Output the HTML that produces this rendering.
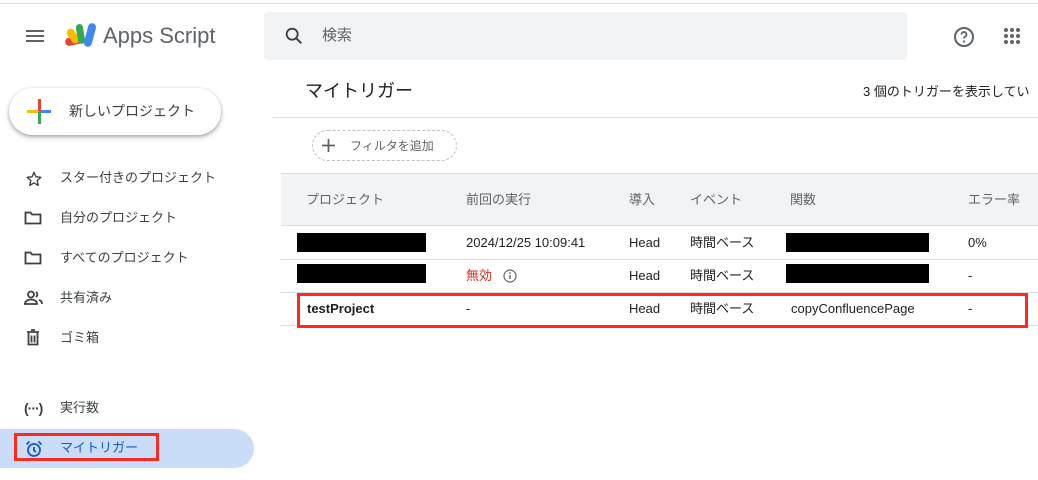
<!DOCTYPE html>
<html><head><meta charset="utf-8"><style>
*{box-sizing:border-box;margin:0;padding:0}
body{width:1038px;height:480px;overflow:hidden;background:#fff;font-family:"Liberation Sans","Noto Sans CJK JP",sans-serif;color:#3c4043;position:relative}
.a{position:absolute}
.nav{position:absolute;left:60px;font-size:13px;color:#3c4043;line-height:16px}
.ic{position:absolute;left:24px}
.t{position:absolute;font-size:13px;color:#202124;white-space:nowrap;line-height:16px}
.h{color:#5f6368}
.blk{position:absolute;background:#000;height:19px}
</style></head><body>
<div class="a" style="left:0;top:3px;width:1038px;height:1px;background:#dadce0"></div>
<div class="a" style="left:26px;top:30px;width:18px;height:2px;background:#5f6368"></div>
<div class="a" style="left:26px;top:35px;width:18px;height:2px;background:#5f6368"></div>
<div class="a" style="left:26px;top:40px;width:18px;height:2px;background:#5f6368"></div>
<svg class="a" style="left:64px;top:22px" width="35" height="27" viewBox="0 0 35 27">
<rect x="1" y="15" width="17" height="8" rx="4" transform="rotate(-12 9 19)" fill="#ea4335"/>
<rect x="5" y="6" width="8" height="16" rx="4" transform="rotate(-35 9 14)" fill="#fbbc04"/>
<rect x="13" y="2" width="7" height="20" rx="3.5" transform="rotate(-10 16 12)" fill="#34a853"/>
<rect x="22" y="1" width="8" height="24" rx="4" transform="rotate(15 26 13)" fill="#4285f4"/>
</svg>
<div class="a" style="left:103px;top:22px;font-size:22px;line-height:28px;color:#5f6368">Apps Script</div>
<div class="a" style="left:264px;top:12px;width:643px;height:48px;background:#f1f3f4;border-radius:4px"></div>
<svg class="a" style="left:283px;top:25px" width="22" height="22" viewBox="0 0 24 24"><circle cx="10" cy="10" r="6" fill="none" stroke="#3c4043" stroke-width="2"/><path d="M14.5 14.5L20 20" stroke="#3c4043" stroke-width="2.2"/></svg>
<div class="a" style="left:322px;top:26px;font-size:15px;line-height:20px;color:#5f6368">検索</div>
<svg class="a" style="left:952px;top:25px" width="24" height="24" viewBox="0 0 24 24"><circle cx="12" cy="12" r="9" fill="none" stroke="#5f6368" stroke-width="2"/><path d="M9.5 9.5a2.5 2.5 0 1 1 3.5 2.3c-.8.4-1 .9-1 1.7" fill="none" stroke="#5f6368" stroke-width="1.8"/><circle cx="12" cy="16.5" r="1.1" fill="#5f6368"/></svg>
<svg class="a" style="left:1003px;top:27px" width="18" height="18" viewBox="0 0 18 18" fill="#5f6368"><circle cx="3" cy="3" r="2"/><circle cx="9" cy="3" r="2"/><circle cx="15" cy="3" r="2"/><circle cx="3" cy="9" r="2"/><circle cx="9" cy="9" r="2"/><circle cx="15" cy="9" r="2"/><circle cx="3" cy="15" r="2"/><circle cx="9" cy="15" r="2"/><circle cx="15" cy="15" r="2"/></svg>
<div class="a" style="left:9px;top:88px;width:212px;height:47px;border-radius:24px;background:#fff;box-shadow:0 1px 3px rgba(0,0,0,.3),0 3px 6px rgba(0,0,0,.15)"></div>
<div class="a" style="left:27px;top:110px;width:12px;height:3px;background:#fbbc04"></div>
<div class="a" style="left:39px;top:110px;width:12px;height:3px;background:#4285f4"></div>
<div class="a" style="left:38px;top:99px;width:3px;height:12px;background:#ea4335"></div>
<div class="a" style="left:38px;top:112px;width:3px;height:12px;background:#34a853"></div>
<div class="a" style="left:69px;top:102px;font-size:14px;line-height:18px;color:#3c4043">新しいプロジェクト</div>
<svg class="ic" style="top:170px;left:25px" width="18" height="18" viewBox="0 0 24 24"><path d="M12 3l2.6 6.1 6.6.6-5 4.4 1.5 6.5L12 17.2 6.3 20.6l1.5-6.5-5-4.4 6.6-.6z" fill="none" stroke="#3c4043" stroke-width="1.8" stroke-linejoin="round"/></svg>
<div class="nav" style="top:170px">スター付きのプロジェクト</div>
<svg class="ic" style="top:210px" width="18" height="16" viewBox="0 0 18 16"><path d="M1.5 2.5h5l1.5 2h8.5v9h-15z" fill="none" stroke="#3c4043" stroke-width="1.8"/></svg>
<div class="nav" style="top:210px">自分のプロジェクト</div>
<svg class="ic" style="top:250px" width="18" height="16" viewBox="0 0 18 16"><path d="M1.5 2.5h5l1.5 2h8.5v9h-15z" fill="none" stroke="#3c4043" stroke-width="1.8"/></svg>
<div class="nav" style="top:250px">すべてのプロジェクト</div>
<svg class="ic" style="top:290px" width="20" height="16" viewBox="0 0 20 16"><circle cx="7" cy="4.5" r="3" fill="none" stroke="#3c4043" stroke-width="1.8"/><path d="M1 14c0-3 3-4.5 6-4.5s6 1.5 6 4.5z" fill="none" stroke="#3c4043" stroke-width="1.8"/><path d="M12 2a3 3 0 0 1 0 5M15 10c2 .5 3 2 3 4" fill="none" stroke="#3c4043" stroke-width="1.8"/></svg>
<div class="nav" style="top:290px">共有済み</div>
<svg class="ic" style="top:329px;left:26px" width="14" height="17" viewBox="0 0 14 17"><path d="M1 3h12M5 1h4M2.5 4v11.5h9V4M5.5 6.5v7M8.5 6.5v7" fill="none" stroke="#3c4043" stroke-width="1.8"/></svg>
<div class="nav" style="top:330px">ゴミ箱</div>
<div class="ic" style="top:400px;font-size:14px;line-height:16px;font-weight:bold;color:#3c4043;letter-spacing:-1px">(···)</div>
<div class="nav" style="top:400px">実行数</div>
<div class="a" style="left:0;top:429px;width:254px;height:39px;background:#c9ddf8;border-radius:0 20px 20px 0"></div>
<div class="a" style="left:14px;top:433px;width:145px;height:28px;border:3px solid #ff2a1f"></div>
<svg class="a" style="left:25px;top:440px" width="18" height="18" viewBox="0 0 18 18"><circle cx="9" cy="10" r="6" fill="none" stroke="#1a57c9" stroke-width="1.8"/><path d="M9 7v3.5l2 1.5M1.5 4.5l3-3M16.5 4.5l-3-3" fill="none" stroke="#1a57c9" stroke-width="1.8"/></svg>
<div class="nav" style="top:440px;color:#1a57c9">マイトリガー</div>
<div class="a" style="left:305px;top:80px;font-size:18px;line-height:22px;color:#202124">マイトリガー</div>
<div class="a" style="left:863px;top:84px;font-size:13px;line-height:16px;color:#202124;white-space:nowrap">3 個のトリガーを表示してい</div>
<div class="a" style="left:273px;top:117px;width:765px;height:1px;background:#dadce0"></div>
<div class="a" style="left:312px;top:130px;width:145px;height:31px;border:1px dashed #bdc1c6;border-radius:16px"></div>
<svg class="a" style="left:321px;top:138px" width="15" height="15" viewBox="0 0 15 15"><path d="M7.5 1v13M1 7.5h13" stroke="#5f6368" stroke-width="1.8"/></svg>
<div class="a" style="left:350px;top:138px;font-size:12px;line-height:16px;color:#5f6368">フィルタを追加</div>
<div class="a" style="left:281px;top:173px;width:757px;height:53px;background:#f1f3f4;border-top:1px solid #dadce0;border-bottom:1px solid #dadce0"></div>
<div class="a" style="left:281px;top:259px;width:757px;height:1px;background:#dadce0"></div>
<div class="a" style="left:281px;top:292px;width:757px;height:1px;background:#dadce0"></div>
<div class="a" style="left:281px;top:325px;width:757px;height:1px;background:#dadce0"></div>
<div class="t h" style="left:306px;top:192px">プロジェクト</div>
<div class="t h" style="left:466px;top:192px">前回の実行</div>
<div class="t h" style="left:629px;top:192px">導入</div>
<div class="t h" style="left:690px;top:192px">イベント</div>
<div class="t h" style="left:790px;top:192px">関数</div>
<div class="t h" style="left:968px;top:192px">エラー率</div>
<div class="blk" style="left:297px;top:233px;width:129px"></div>
<div class="t" style="left:466px;top:235px">2024/12/25 10:09:41</div>
<div class="t" style="left:629px;top:235px">Head</div>
<div class="t" style="left:690px;top:235px">時間ベース</div>
<div class="blk" style="left:786px;top:233px;width:143px"></div>
<div class="t" style="left:968px;top:235px">0%</div>
<div class="blk" style="left:297px;top:264px;width:129px"></div>
<div class="t" style="left:466px;top:268px;color:#d93025">無効</div>
<svg class="a" style="left:503px;top:269px" width="14" height="14" viewBox="0 0 14 14"><circle cx="7" cy="7" r="6" fill="none" stroke="#5f6368" stroke-width="1.2"/><path d="M7 6v4" stroke="#5f6368" stroke-width="1.4"/><circle cx="7" cy="4" r=".9" fill="#5f6368"/></svg>
<div class="t" style="left:629px;top:268px">Head</div>
<div class="t" style="left:690px;top:268px">時間ベース</div>
<div class="blk" style="left:786px;top:264px;width:143px"></div>
<div class="t" style="left:968px;top:268px">-</div>
<div class="t" style="left:307px;top:301px;font-weight:bold">testProject</div>
<div class="t" style="left:466px;top:301px">-</div>
<div class="t" style="left:629px;top:301px">Head</div>
<div class="t" style="left:690px;top:301px">時間ベース</div>
<div class="t" style="left:791px;top:301px">copyConfluencePage</div>
<div class="t" style="left:968px;top:301px">-</div>
<div class="a" style="left:297px;top:293px;width:731px;height:35px;border:3px solid #ff2a1f"></div>
</body></html>
